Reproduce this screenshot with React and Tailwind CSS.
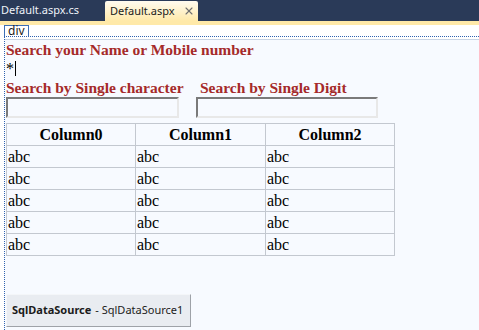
import { X } from "lucide-react";

const serif = { fontFamily: '"Liberation Serif", "Times New Roman", serif' };

export default function App() {
  const rows = [0, 1, 2, 3, 4];

  return (
    <div className="w-[479px] h-[330px] overflow-hidden bg-white font-['Noto_Sans',sans-serif]">
      {/* document tabs */}
      <div className="h-[21px] bg-[#2a3a58] flex items-end">
        <div className="w-[105px] h-[21px] pl-[1px] flex items-center text-[11px] text-[#eef2f8]">
          Default.aspx.cs
        </div>
        <div className="w-[93px] h-[20px] rounded-t-[2px] bg-gradient-to-b from-[#fffbf0] to-[#ffe9a8] flex items-center pl-[5px] text-[11px] text-[#1b1b1b]">
          <span>Default.aspx</span>
          <X className="ml-[8px] w-[12px] h-[12px] text-[#707070]" strokeWidth={2.25} />
        </div>
      </div>
      <div className="h-[4px] bg-[#ffe9a8]" />

      {/* design surface */}
      <div className="pl-[4px]">
        <div className="h-[11px] flex">
          <div className="h-[11px] border border-b-0 border-[#3d6fb5] px-[3px] text-[12px] leading-[10px] text-[#1b1b1b]">
            div
          </div>
        </div>
        <div className="h-[300px] border-l border-t border-dotted border-[#2f62b0]">
          <div className="h-[2px] bg-white" />
          <div className="h-full border-t border-[#c8d4e4] bg-[#f7faff] pl-[1px]" style={serif}>
            <div className="h-[19px] leading-[19px] text-[15.5px] font-bold text-[#a52a2a]">
              Search your Name or Mobile number
            </div>
            <div className="h-[19px] leading-[19px] text-[16px] text-black flex items-center">
              <span>*</span>
              <span className="ml-[1px] w-[1px] h-[15px] bg-black" />
            </div>
            <div className="h-[19px] leading-[19px] text-[15.5px] font-bold text-[#a52a2a] flex">
              <span className="w-[194px]">Search by Single character</span>
              <span>Search by Single Digit</span>
            </div>
            <div className="flex">
              <div className="w-[173px] h-[21px] border-2 border-t-[#7a7a7a] border-l-[#7a7a7a] border-r-[#e8e8e8] border-b-[#e8e8e8] bg-[#f7faff]" />
              <div className="ml-[17px] w-[182px] h-[21px] border-2 border-t-[#7a7a7a] border-l-[#7a7a7a] border-r-[#e8e8e8] border-b-[#e8e8e8] bg-[#f7faff]" />
            </div>
            <table className="mt-[5px] w-[389px] border-collapse border border-[#a8acb2] text-[16px] text-black">
              <thead>
                <tr className="h-[22px]">
                  <th className="w-[129px] border border-[#c3c8d0] font-bold leading-[20px]">Column0</th>
                  <th className="w-[130px] border border-[#c3c8d0] font-bold leading-[20px]">Column1</th>
                  <th className="border border-[#c3c8d0] font-bold leading-[20px]">Column2</th>
                </tr>
              </thead>
              <tbody>
                {rows.map((r) => (
                  <tr key={r} className="h-[22px]">
                    <td className="border border-[#c3c8d0] pl-[1px] leading-[20px]">abc</td>
                    <td className="border border-[#c3c8d0] pl-[1px] leading-[20px]">abc</td>
                    <td className="border border-[#c3c8d0] pl-[1px] leading-[20px]">abc</td>
                  </tr>
                ))}
              </tbody>
            </table>
            <div className="mt-[38px] w-[185px] h-[33px] flex items-center pl-[5px] bg-[#e9ecf1] border border-[#f4f6f9] border-r-[#9ea2a8] border-b-[#9ea2a8] text-[11px] whitespace-nowrap text-[#1b1b1b] font-['Noto_Sans',sans-serif]">
              <span className="font-bold">SqlDataSource</span>
              <span className="ml-[4px]">- SqlDataSource1</span>
            </div>
          </div>
        </div>
      </div>
    </div>
  );
}
